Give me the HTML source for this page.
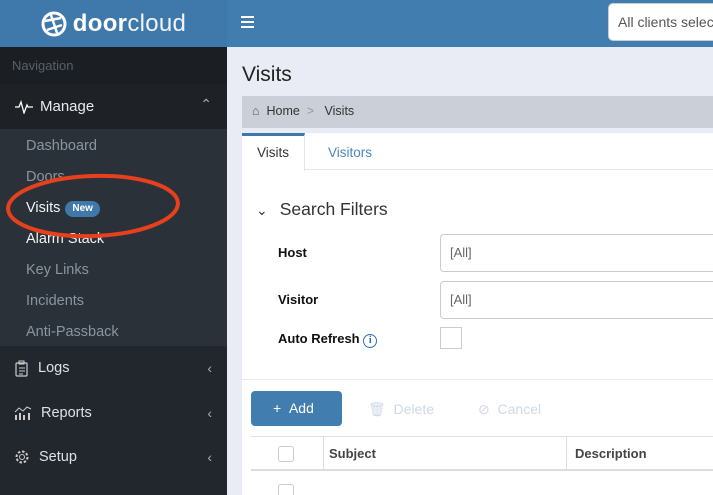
<!DOCTYPE html>
<html><head><style>
*{margin:0;padding:0;box-sizing:border-box}
html,body{width:713px;height:495px;overflow:hidden}
body{font-family:"Liberation Sans",sans-serif;background:#e9ecf4;position:relative}
.sb{position:absolute;left:0;top:0;width:227px;height:495px;background:#22272e}
.logo{height:47px;background:#3f79ab;color:#fff;display:flex;align-items:center;justify-content:center;font-size:24px;letter-spacing:0.3px}
.navh{height:37px;background:#1b1f24;color:#56606a;font-size:13px;padding:11px 12px}
.manage{height:45px;background:#1e2227;color:#e8ebee;font-size:15px;display:flex;align-items:center;padding-left:14px;position:relative}
.sub{background:#2b3139;height:217px;padding-top:2px}
.sub div{height:31px;line-height:31px;padding-left:26px;color:#8a959f;font-size:14.5px}
.sub div.w{color:#f2f4f6}
.badge{display:inline-block;background:#3f79ab;color:#fff;font-size:10px;font-weight:bold;border-radius:9px;padding:0 7px;line-height:16px;margin-left:5px;vertical-align:1px}
.it{height:44.5px;display:flex;align-items:center;padding-left:14px;color:#dde1e5;font-size:14.5px;position:relative}
.it svg{margin-right:9px}
.chev{position:absolute;right:15px;color:#aab;font-size:14px}
.top{position:absolute;left:227px;top:0;right:0;height:47px;background:#427db0}
.sel{position:absolute;left:608px;top:3px;width:120px;height:38px;background:#fff;border:1px solid #ccc;border-radius:5px;font-size:14px;color:#555;padding:10px 9px;white-space:nowrap;overflow:hidden}
h1{position:absolute;left:242px;top:63px;font-weight:normal;font-size:21px;color:#222}
.bc{position:absolute;left:242px;top:96px;right:0;height:32px;background:#cbcfd8;font-size:12.5px;color:#333;padding:8px 10px}
.panel{position:absolute;left:242px;top:133px;right:0;height:362px;background:#fff}
.tabs{height:37px;border-bottom:1px solid #e3e6ea;position:relative}
.tab1{position:absolute;left:0;top:0;width:63px;height:38px;border-top:3px solid #3f79ab;border-right:1px solid #e3e6ea;background:#fff;font-size:13.5px;color:#333;padding:9px 15px}
.tab2{position:absolute;left:86px;top:12px;font-size:13.5px;color:#4a86bd}
.lbl{position:absolute;font-size:13px;font-weight:bold;color:#111}
.inp{position:absolute;left:198px;width:300px;height:38px;border:1px solid #ccc;border-radius:4px;font-size:13px;color:#666;padding:10px 9px}
.btn{position:absolute;left:9px;top:258px;width:91px;height:35px;background:#427db0;border-radius:4px;color:#fff;font-size:14px;padding:9px 22px}
.dis{position:absolute;top:268px;font-size:14px;color:#cfd9e6}
</style></head><body>
<div class="sb">
<div class="logo"><svg width="26" height="26" viewBox="0 0 26 26" style="margin-right:6px"><circle cx="13" cy="13" r="11" fill="none" stroke="#fff" stroke-width="3"/><path d="M4 10 L20 7 M6 19 L21 14 M10 4 L16 22" stroke="#fff" stroke-width="2.5" fill="none"/></svg><b>door</b><span style="font-weight:normal;color:#f0f4f8">cloud</span></div>
<div class="navh">Navigation</div>
<div class="manage"><svg width="20" height="14" viewBox="0 0 20 14" style="margin-right:6px"><path d="M1 7h4l2-5 3 11 3-8 1 2h5" stroke="#fff" stroke-width="1.3" fill="none"/></svg>Manage<span class="chev" style="top:12px">&#8963;</span></div>
<div class="sub">
<div>Dashboard</div><div>Doors</div><div class="w">Visits<span class="badge">New</span></div><div class="w">Alarm Stack</div><div>Key Links</div><div>Incidents</div><div>Anti-Passback</div>
</div>
<div class="it"><svg width="15" height="17" viewBox="0 0 15 17"><rect x="2" y="3" width="11" height="13" rx="1" fill="none" stroke="#ccc" stroke-width="1.2"/><rect x="5" y="1" width="5" height="3" fill="none" stroke="#ccc"/><path d="M5 8h6M5 11h6M5 14h4" stroke="#ccc"/></svg>Logs<span class="chev">&lsaquo;</span></div>
<div class="it"><svg width="18" height="16" viewBox="0 0 18 16"><path d="M1 7l4-4 4 3 4-4 4 2" stroke="#ccc" fill="none"/><path d="M2 10v5M6 8v7M10 10v5M15 8v7" stroke="#ccc" stroke-width="2"/></svg>Reports<span class="chev">&lsaquo;</span></div>
<div class="it"><svg width="16" height="16" viewBox="0 0 16 16"><circle cx="8" cy="8" r="5.5" fill="none" stroke="#ccc" stroke-width="2" stroke-dasharray="2.5 1.8"/><circle cx="8" cy="8" r="2.5" fill="none" stroke="#ccc"/></svg>Setup<span class="chev">&lsaquo;</span></div>
</div>
<svg style="position:absolute;left:0;top:160px" width="190" height="95"><ellipse cx="93" cy="46" rx="85" ry="30" fill="none" stroke="#e6401d" stroke-width="4" transform="rotate(-2 93 46)"/></svg>
<div class="top"><div style="position:absolute;left:14px;top:16px;width:13px"><div style="height:2px;background:#fff;margin-bottom:3px"></div><div style="height:2px;background:#fff;margin-bottom:3px"></div><div style="height:2px;background:#fff"></div></div></div>
<div class="sel">All clients selected</div>
<h1>Visits</h1>
<div class="bc"><span style="color:#555">&#8962;</span>&nbsp; Home &nbsp;<span style="color:#999">&gt;</span>&nbsp;&nbsp; Visits</div>
<div class="panel">
<div class="tabs"><div class="tab1">Visits</div><div class="tab2">Visitors</div></div>
<div style="position:absolute;left:14px;top:66px;font-size:17.5px;color:#333"><span style="font-size:14px;margin-right:12px">&#8964;</span>Search Filters</div>
<div class="lbl" style="left:36px;top:112px">Host</div>
<div class="inp" style="top:101px">[All]</div>
<div class="lbl" style="left:36px;top:159px">Visitor</div>
<div class="inp" style="top:148px">[All]</div>
<div class="lbl" style="left:36px;top:198px">Auto Refresh <span style="display:inline-block;width:14px;height:14px;border:1.5px solid #2c6fb8;border-radius:50%;color:#2c6fb8;font-size:10px;text-align:center;line-height:11px;font-family:'Liberation Serif',serif">i</span></div>
<div style="position:absolute;left:198px;top:194px;width:22px;height:22px;border:1px solid #ccc"></div>
<div style="position:absolute;left:0;right:0;top:246px;border-top:1px solid #e8ebee"></div>
<div class="btn">+ &nbsp;Add</div>
<div class="dis" style="left:126px">&#128465; &nbsp;Delete</div>
<div class="dis" style="left:236px">&#8856; &nbsp;Cancel</div>
<div style="position:absolute;left:9px;right:0;top:303px;height:35px;border-top:1px solid #ddd;border-bottom:2px solid #ddd"></div>
<div style="position:absolute;left:81px;top:303px;height:35px;border-left:1px solid #ddd"></div>
<div style="position:absolute;left:324px;top:303px;height:35px;border-left:1px solid #ddd"></div>
<div style="position:absolute;left:36px;top:313px;width:16px;height:16px;border:1px solid #ccc;border-radius:3px"></div>
<div style="position:absolute;left:36px;top:351px;width:16px;height:16px;border:1px solid #ccc;border-radius:3px"></div>
<div class="lbl" style="left:87px;top:313px;color:#444">Subject</div>
<div class="lbl" style="left:333px;top:313px;color:#444">Description</div>
</div>
</body></html>
